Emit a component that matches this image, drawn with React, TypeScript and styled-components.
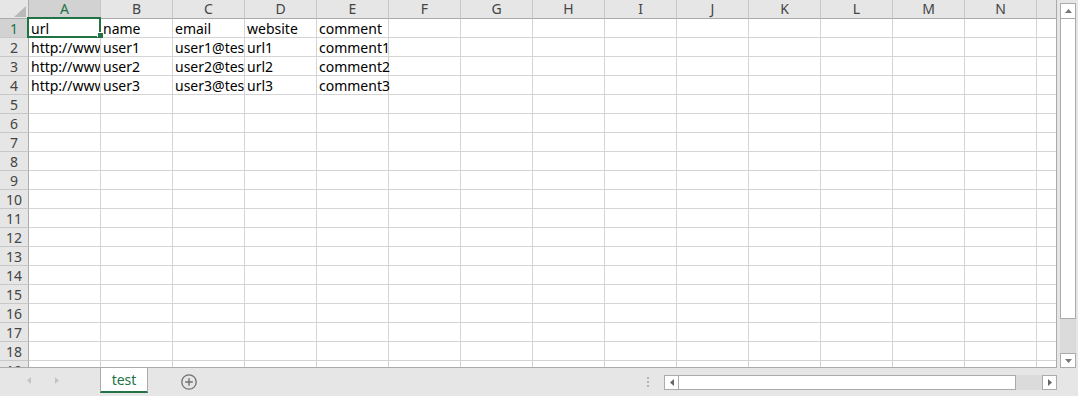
import React from "react";
import styled, { createGlobalStyle } from "styled-components";

const GlobalStyle = createGlobalStyle`
  html, body { margin: 0; padding: 0; }
  body {
    font-family: "Noto Sans", "Liberation Sans", sans-serif;
    background: #e6e6e6;
  }
  * { box-sizing: border-box; }
`;

const GREEN = "#217346";
const COLS = "ABCDEFGHIJKLMNO".split("");
const ROW_COUNT = 19;

const DATA: Record<string, string> = {
  A1: "url", B1: "name", C1: "email", D1: "website", E1: "comment",
  A2: "http://www.test1.com", B2: "user1", C2: "user1@test.com", D2: "url1", E2: "comment1",
  A3: "http://www.test2.com", B3: "user2", C3: "user2@test.com", D3: "url2", E3: "comment2",
  A4: "http://www.test3.com", B4: "user3", C4: "user3@test.com", D4: "url3", E4: "comment3",
};

const Window = styled.div`
  width: 1078px;
  height: 396px;
  display: flex;
  flex-direction: column;
  overflow: hidden;
  background: #e6e6e6;
`;

const Main = styled.div`
  display: flex;
  height: 368px;
  flex: none;
`;

const Sheet = styled.div`
  width: 1057px;
  height: 368px;
  flex: none;
  overflow: hidden;
  background: #fff;
  border-right: 1px solid #ababab;
  border-bottom: 1px solid #ababab;
  display: grid;
  grid-template-columns: 29px repeat(15, 72px);
  grid-template-rows: 19px repeat(19, 19px);
  align-content: start;
  justify-content: start;
`;

const Corner = styled.div`
  position: relative;
  background: #e6e6e6;
  border-right: 1px solid #ababab;
  border-bottom: 1px solid #ababab;
  &::after {
    content: "";
    position: absolute;
    right: 2px;
    bottom: 1px;
    width: 12px;
    height: 11px;
    background: #b9b9b9;
    clip-path: polygon(100% 0, 100% 100%, 0 100%);
  }
`;

const ColHeader = styled.div<{ $active?: boolean }>`
  background: ${(p) => (p.$active ? "#d2d2d2" : "#e6e6e6")};
  color: ${(p) => (p.$active ? GREEN : "#444")};
  border-right: 1px solid #c8c8c8;
  border-bottom: 1px solid ${(p) => (p.$active ? GREEN : "#ababab")};
  font-size: 14px;
  line-height: 18px;
  text-align: center;
`;

const RowHeader = styled.div<{ $active?: boolean }>`
  background: ${(p) => (p.$active ? "#d2d2d2" : "#e6e6e6")};
  color: ${(p) => (p.$active ? GREEN : "#444")};
  border-right: 1px solid ${(p) => (p.$active ? GREEN : "#ababab")};
  border-bottom: 1px solid #c8c8c8;
  font-size: 14px;
  line-height: 18px;
  padding-top: 1px;
  text-align: center;
  overflow: hidden;
`;

const Cell = styled.div<{ $selected?: boolean; $spill?: boolean }>`
  position: relative;
  border-right: 1px solid #d4d4d4;
  border-bottom: 1px solid #d4d4d4;
  font-size: 14px;
  line-height: 18px;
  padding: 1px 0 0 2px;
  color: #000;
  white-space: nowrap;
  overflow: ${(p) => (p.$selected || p.$spill ? "visible" : "hidden")};
  z-index: ${(p) => (p.$selected ? 2 : p.$spill ? 1 : 0)};
  ${(p) =>
    p.$selected &&
    `
    &::after {
      content: "";
      position: absolute;
      left: -2px;
      top: -2px;
      right: -1px;
      bottom: -1px;
      border: 2px solid ${GREEN};
      pointer-events: none;
    }
    &::before {
      content: "";
      position: absolute;
      right: -3px;
      bottom: -1px;
      width: 5px;
      height: 5px;
      background: ${GREEN};
      box-shadow: -1px -1px 0 0 #fff;
      z-index: 3;
    }
  `}
`;

const CellText = styled.span<{ $spill?: boolean }>`
  display: block;
  overflow: ${(p) => (p.$spill ? "visible" : "hidden")};
`;

const VScroll = styled.div`
  width: 21px;
  height: 368px;
  flex: none;
  display: flex;
  flex-direction: column;
  padding: 3px 2px 0 3px;
`;

const ScrollButton = styled.div<{ $h?: number; $w?: number }>`
  flex: none;
  width: ${(p) => (p.$w ? `${p.$w}px` : "auto")};
  height: ${(p) => (p.$h ? `${p.$h}px` : "auto")};
  background: #fff;
  border: 1px solid #ababab;
  display: flex;
  align-items: center;
  justify-content: center;
`;

const VThumb = styled.div`
  flex: none;
  height: 300px;
  background: #fff;
  border: 1px solid #ababab;
  border-top: none;
`;

const VTrack = styled.div`
  flex: 1;
  background: #dbdbdb;
`;

const BottomBar = styled.div`
  height: 28px;
  flex: none;
  display: flex;
  align-items: flex-start;
  background: #e6e6e6;
`;

const NavArea = styled.div`
  width: 100px;
  height: 25px;
  flex: none;
  display: flex;
  align-items: center;
  padding-left: 27px;
  gap: 24px;
`;

const SheetTab = styled.div`
  width: 48px;
  height: 25px;
  flex: none;
  background: #fff;
  border-left: 1px solid #ababab;
  border-right: 1px solid #ababab;
  border-bottom: 2px solid ${GREEN};
  color: ${GREEN};
  font-size: 14px;
  line-height: 23px;
  text-align: center;
`;

const AddSheet = styled.div`
  flex: none;
  margin: 6px 0 0 33px;
  width: 16px;
  height: 16px;
  display: flex;
`;

const Spacer = styled.div`
  flex: 1;
`;

const Dots = styled.div`
  flex: none;
  margin: 9px 15px 0 0;
  display: flex;
  flex-direction: column;
  gap: 2px;
`;

const Dot = styled.div`
  width: 2px;
  height: 2px;
  background: #b3b3b3;
`;

const HScroll = styled.div`
  flex: none;
  width: 393px;
  height: 15px;
  margin: 7px 21px 0 0;
  display: flex;
`;

const HThumb = styled.div`
  flex: none;
  width: 337px;
  background: #fff;
  border: 1px solid #ababab;
  border-left: none;
`;

const HTrack = styled.div`
  flex: 1;
  background: #dbdbdb;
`;

const Tri = ({ dir, color, w, h }: { dir: "up" | "down" | "left" | "right"; color: string; w: number; h: number }) => {
  const pts =
    dir === "up"
      ? `0,${h} ${w / 2},0 ${w},${h}`
      : dir === "down"
      ? `0,0 ${w},0 ${w / 2},${h}`
      : dir === "left"
      ? `${w},0 ${w},${h} 0,${h / 2}`
      : `0,0 0,${h} ${w},${h / 2}`;
  return (
    <svg width={w} height={h} viewBox={`0 0 ${w} ${h}`} style={{ display: "block" }}>
      <polygon points={pts} fill={color} />
    </svg>
  );
};

const PlusCircle = () => (
  <svg width="16" height="16" viewBox="0 0 16 16">
    <circle cx="8" cy="8" r="7.2" fill="none" stroke="#707070" strokeWidth="1.3" />
    <path d="M8 4.2v7.6M4.2 8h7.6" stroke="#707070" strokeWidth="1.4" />
  </svg>
);

export default function App() {
  const rows = Array.from({ length: ROW_COUNT }, (_, i) => i + 1);
  return (
    <>
      <GlobalStyle />
      <Window>
        <Main>
          <Sheet>
            <Corner />
            {COLS.map((c) => (
              <ColHeader key={c} $active={c === "A"}>
                {c}
              </ColHeader>
            ))}
            {rows.map((r) => (
              <React.Fragment key={r}>
                <RowHeader $active={r === 1}>{r}</RowHeader>
                {COLS.map((c, ci) => {
                  const value = DATA[c + r] ?? "";
                  const next = ci + 1 < COLS.length ? DATA[COLS[ci + 1] + r] : undefined;
                  const spill = value !== "" && !next;
                  return (
                    <Cell key={c + r} $selected={c === "A" && r === 1} $spill={spill}>
                      <CellText $spill={spill}>{value}</CellText>
                    </Cell>
                  );
                })}
              </React.Fragment>
            ))}
          </Sheet>
          <VScroll>
            <ScrollButton $h={16}>
              <Tri dir="up" color="#777" w={7} h={4} />
            </ScrollButton>
            <VThumb />
            <VTrack />
            <ScrollButton $h={15}>
              <Tri dir="down" color="#777" w={7} h={4} />
            </ScrollButton>
          </VScroll>
        </Main>
        <BottomBar>
          <NavArea>
            <Tri dir="left" color="#c4c4c4" w={4} h={7} />
            <Tri dir="right" color="#c4c4c4" w={4} h={7} />
          </NavArea>
          <SheetTab>test</SheetTab>
          <AddSheet>
            <PlusCircle />
          </AddSheet>
          <Spacer />
          <Dots>
            <Dot />
            <Dot />
            <Dot />
          </Dots>
          <HScroll>
            <ScrollButton $w={15}>
              <Tri dir="left" color="#666" w={4} h={7} />
            </ScrollButton>
            <HThumb />
            <HTrack />
            <ScrollButton $w={15}>
              <Tri dir="right" color="#666" w={4} h={7} />
            </ScrollButton>
          </HScroll>
        </BottomBar>
      </Window>
    </>
  );
}
